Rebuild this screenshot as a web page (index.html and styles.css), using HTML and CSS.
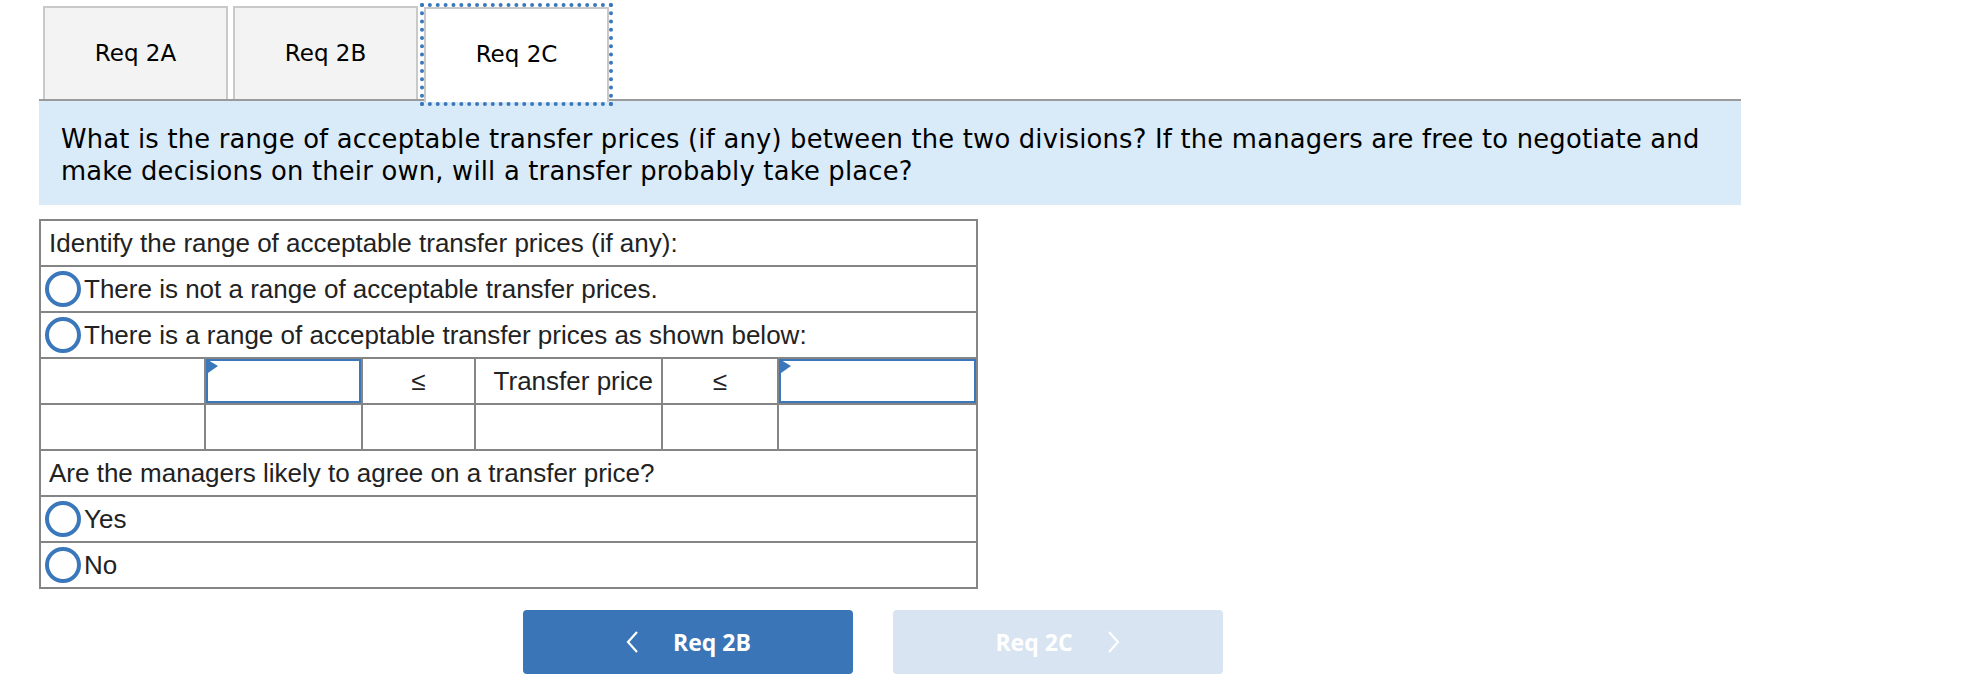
FILE: index.html
```html
<!DOCTYPE html>
<html>
<head>
<meta charset="utf-8">
<link rel="stylesheet" href="styles.css">
</head>
<body>
<div class="page">
  <nav class="tabs">
    <div class="tab">Req 2A</div>
    <div class="tab">Req 2B</div>
    <div class="tab active">Req 2C</div>
  </nav>
  <div class="question">What is the range of acceptable transfer prices (if any) between the two divisions? If the managers are free to negotiate and make decisions on their own, will a transfer probably take place?</div>
  <table class="answer">
    <colgroup>
      <col class="c1"><col class="c2"><col class="c3"><col class="c4"><col class="c5"><col class="c6">
    </colgroup>
    <tr><td colspan="6" class="label">Identify the range of acceptable transfer prices (if any):</td></tr>
    <tr><td colspan="6" class="opt"><span class="radio"></span><span>There is not a range of acceptable transfer prices.</span></td></tr>
    <tr><td colspan="6" class="opt"><span class="radio"></span><span>There is a range of acceptable transfer prices as shown below:</span></td></tr>
    <tr>
      <td></td>
      <td class="input-cell"><div class="input"><span class="flag"></span></div></td>
      <td class="center">≤</td>
      <td class="right">Transfer price</td>
      <td class="center">≤</td>
      <td class="input-cell"><div class="input"><span class="flag"></span></div></td>
    </tr>
    <tr><td></td><td></td><td></td><td></td><td></td><td></td></tr>
    <tr><td colspan="6" class="label">Are the managers likely to agree on a transfer price?</td></tr>
    <tr><td colspan="6" class="opt"><span class="radio"></span><span>Yes</span></td></tr>
    <tr><td colspan="6" class="opt"><span class="radio"></span><span>No</span></td></tr>
  </table>
  <div class="nav-buttons">
    <button class="btn prev">
      <svg class="chev" width="14" height="22" viewBox="0 0 14 22"><polyline points="12,1 3,11 12,21" fill="none" stroke="#fff" stroke-width="2.2"/></svg>
      <span>Req 2B</span>
    </button>
    <button class="btn next">
      <span>Req 2C</span>
      <svg class="chev" width="14" height="22" viewBox="0 0 14 22"><polyline points="2,1 11,11 2,21" fill="none" stroke="#fff" stroke-width="2.2"/></svg>
    </button>
  </div>
</div>
</body>
</html>
```
FILE: styles.css
```css
body {
  margin: 0;
  background: #fff;
  font-family: "DejaVu Sans", Verdana, sans-serif;
}
.page {
  margin-left: 39px;
  width: 1702px;
}
.tabs {
  display: flex;
  gap: 5px;
  padding: 6px 0 0 4px;
  border-bottom: 2px solid #9a9a9a;
  height: 93px;
  box-sizing: content-box;
}
.tab {
  width: 185px;
  height: 93px;
  box-sizing: border-box;
  border: 2px solid #c9c9c9;
  border-bottom: none;
  background: #f3f3f3;
  display: flex;
  align-items: center;
  justify-content: center;
  font-size: 23px;
  color: #000;
  padding-bottom: 2px;
}
.tab.active {
  background: #fff;
  margin-left: 1px;
  height: 95px;
  margin-bottom: -2px;
  margin-top: 1px;
  outline: 4px dotted #3a77bb;
  outline-offset: 0;
  padding-bottom: 4px;
}
.question {
  background: #d9ebf9;
  padding: 22px 22px 18px 22px;
  font-size: 25.8px;
  letter-spacing: 0.2px;
  line-height: 32px;
  color: #000;
}
.answer {
  margin-top: 14px;
  border-collapse: collapse;
  width: 937px;
  font-family: "Liberation Sans", Arial, sans-serif;
  font-size: 26px;
  color: #222;
  table-layout: fixed;
}
.c1 { width: 165px; }
.c2 { width: 157px; }
.c3 { width: 113px; }
.c4 { width: 187px; }
.c5 { width: 116px; }
.c6 { width: 199px; }
.answer td {
  border: 2px solid #858585;
  height: 46px;
  box-sizing: border-box;
  padding: 0 8px;
  white-space: nowrap;
  line-height: 1;
}
.answer td.opt {
  padding-left: 4px;
}
.opt .radio {
  display: inline-block;
  width: 36px;
  height: 36px;
  box-sizing: border-box;
  border: 4px solid #3a77bb;
  border-radius: 50%;
  vertical-align: middle;
  margin-right: 3px;
}
.opt span {
  vertical-align: middle;
}
.center { text-align: center; }
.right { text-align: right; }
.answer td.input-cell {
  padding: 0;
  position: relative;
}
.input {
  position: relative;
  height: 44px;
  box-sizing: border-box;
  border: 2px solid #3a77bb;
}
.flag {
  position: absolute;
  left: 0;
  top: -1px;
  width: 0;
  height: 0;
  border-top: 6px solid transparent;
  border-bottom: 7px solid transparent;
  border-left: 10px solid #3a77bb;
}
.nav-buttons {
  display: flex;
  gap: 40px;
  margin: 21px 0 0 484px;
}
.btn {
  width: 330px;
  height: 64px;
  border: none;
  border-radius: 4px;
  display: flex;
  align-items: center;
  justify-content: center;
  gap: 34px;
  font-family: "Open Sans", sans-serif;
  font-weight: 700;
  font-size: 23px;
  color: #fff;
  padding: 0;
}
.btn.prev { background: #3975b7; }
.btn.next { background: #d8e4f1; }
.chev { display: block; }
```
